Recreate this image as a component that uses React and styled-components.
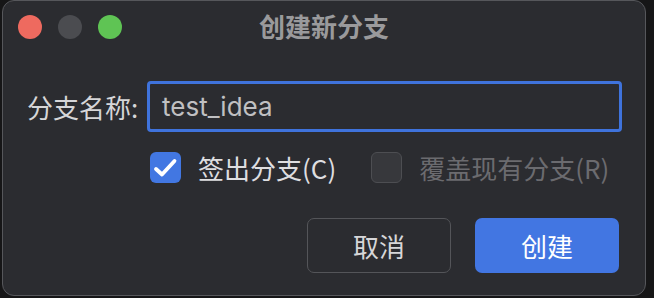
import React from "react";
import styled, { createGlobalStyle } from "styled-components";

const Global = createGlobalStyle`
  html, body { margin: 0; padding: 0; background: #161617; }
  body { font-family: "Noto Sans CJK SC", "Noto Sans", sans-serif; }
  #root { width: 654px; height: 298px; }
`;

const Desk = styled.div`
  display: flex;
  width: 654px;
  height: 298px;
  padding-left: 2px;
  box-sizing: border-box;
  overflow: hidden;
`;

const Window = styled.div`
  width: 644px;
  height: 296px;
  box-sizing: border-box;
  border: 1px solid #56575b;
  border-radius: 12px;
  background: #2b2c30;
  display: flex;
  flex-direction: column;
  flex: none;
`;

const TitleBar = styled.div`
  height: 51px;
  display: grid;
  grid-template-columns: 1fr auto 1fr;
  align-items: center;
  padding: 0 15px;
`;

const Lights = styled.div`
  display: flex;
  gap: 16px;
  align-items: center;
`;

const Light = styled.span`
  width: 24px;
  height: 24px;
  border-radius: 50%;
  background: ${(p) => p.$color};
`;

const Title = styled.div`
  color: #9a9a9c;
  font-size: 26px;
  line-height: 30px;
  font-weight: 700;
  margin-top: -2px;
`;

const FieldRow = styled.div`
  display: flex;
  align-items: center;
  margin-top: 29px;
  padding-left: 24px;
  gap: 10px;
`;

const Label = styled.label`
  color: #d6d6d8;
  font-size: 26px;
  line-height: 30px;
  white-space: nowrap;
  width: 110px;
`;

const Input = styled.div`
  width: 475px;
  height: 51px;
  box-sizing: border-box;
  border: 3px solid #3f73dc;
  border-radius: 4px;
  display: flex;
  align-items: center;
  padding-left: 12px;
  color: #c0c0c2;
  font-family: "Inter", "Noto Sans", sans-serif;
  font-size: 26px;
`;

const Options = styled.div`
  display: flex;
  align-items: center;
  margin-top: 20px;
  padding-left: 147px;
  height: 31px;
`;

const Option = styled.div`
  display: flex;
  align-items: center;
  gap: 17px;
  margin-right: 35px;
  color: ${(p) => (p.$disabled ? "#6b6b6f" : "#dedee0")};
  font-size: 26px;
  line-height: 30px;
  white-space: nowrap;
`;

const Box = styled.span`
  width: 31px;
  height: 31px;
  box-sizing: border-box;
  border-radius: 6px;
  display: flex;
  align-items: center;
  justify-content: center;
  background: ${(p) => (p.$checked ? "#4277e2" : "#37383c")};
  border: ${(p) => (p.$checked ? "none" : "1.5px solid #4d4e52")};
`;

const Actions = styled.div`
  display: flex;
  justify-content: flex-end;
  gap: 24px;
  margin-top: 35px;
  padding-right: 26px;
`;

const Button = styled.button`
  width: 144px;
  height: 55px;
  box-sizing: border-box;
  border-radius: 7px;
  font-family: "Noto Sans CJK SC", sans-serif;
  font-size: 26px;
  cursor: pointer;
  color: ${(p) => (p.$primary ? "#ffffff" : "#d6d6d8")};
  background: ${(p) => (p.$primary ? "#4276e2" : "transparent")};
  border: ${(p) => (p.$primary ? "none" : "1.5px solid #545559")};
`;

const Check = () => (
  <svg width="25" height="25" viewBox="0 0 25 25">
    <polyline
      points="3,14 9,19.5 21.5,6"
      fill="none"
      stroke="#fff"
      strokeWidth="3.8"
      strokeLinecap="round"
      strokeLinejoin="round"
    />
  </svg>
);

export default function App() {
  return (
    <>
      <Global />
      <Desk>
        <Window>
          <TitleBar>
            <Lights>
              <Light $color="#ee6a5f" />
              <Light $color="#4b4c50" />
              <Light $color="#5fc454" />
            </Lights>
            <Title>创建新分支</Title>
            <span />
          </TitleBar>
          <FieldRow>
            <Label>分支名称:</Label>
            <Input>test_idea</Input>
          </FieldRow>
          <Options>
            <Option>
              <Box $checked>
                <Check />
              </Box>
              签出分支(C)
            </Option>
            <Option $disabled>
              <Box />
              覆盖现有分支(R)
            </Option>
          </Options>
          <Actions>
            <Button>取消</Button>
            <Button $primary>创建</Button>
          </Actions>
        </Window>
      </Desk>
    </>
  );
}
